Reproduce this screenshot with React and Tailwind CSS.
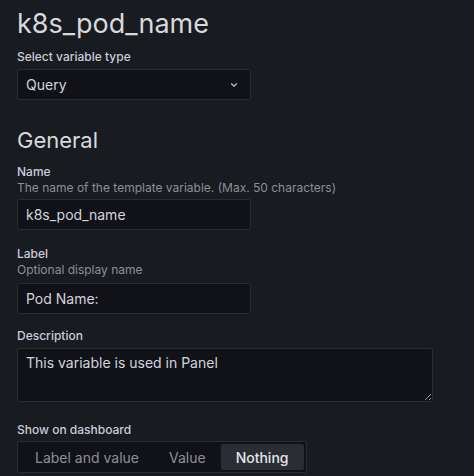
import React from "react";

function Label({ children, className = "" }) {
  return (
    <div className={`text-[12px] leading-[16px] font-medium text-[#ccccdc] ${className}`}>
      {children}
    </div>
  );
}

function Desc({ children }) {
  return <div className="text-[12px] leading-[16px] text-[#8e8f97]">{children}</div>;
}

function Input({ value, className = "" }) {
  return (
    <div
      className={`w-[234px] h-[31px] flex items-center px-[8px] bg-[#111217] border border-[#2a2c32] rounded-[2px] text-[14px] text-[#d4d4de] ${className}`}
    >
      {value}
    </div>
  );
}

export default function App() {
  return (
    <div
      className="w-[474px] h-[476px] bg-[#181b1f] px-[17px] overflow-hidden"
      style={{ fontFamily: "Inter, 'Noto Sans', sans-serif" }}
    >
      <div className="pt-[5px] text-[27px] leading-[37px] text-[#d8d9de]">k8s_pod_name</div>

      <Label className="mt-[7px]">Select variable type</Label>
      <div className="mt-[4px] w-[234px] h-[31px] flex items-center justify-between px-[8px] bg-[#111217] border border-[#2a2c32] rounded-[2px] text-[14px] text-[#d4d4de]">
        <span>Query</span>
        <svg width="10" height="10" viewBox="0 0 10 10" className="mr-[3px]">
          <path d="M2.5 3.8 L5 6.2 L7.5 3.8" fill="none" stroke="#b5b6be" strokeWidth="1.3" strokeLinecap="round" strokeLinejoin="round" />
        </svg>
      </div>

      <div className="mt-[26px] text-[22px] leading-[28px] text-[#d8d9de]">General</div>

      <Label className="mt-[10px]">Name</Label>
      <Desc>The name of the template variable. (Max. 50 characters)</Desc>
      <Input className="mt-[3px]" value="k8s_pod_name" />

      <Label className="mt-[16px]">Label</Label>
      <Desc>Optional display name</Desc>
      <Input className="mt-[5px]" value="Pod Name:" />

      <Label className="mt-[14px]">Description</Label>
      <textarea
        readOnly
        defaultValue="This variable is used in Panel"
        className="block mt-[4px] w-[416px] h-[54px] px-[8px] py-[4px] bg-[#111217] border border-[#2a2c32] rounded-[2px] text-[14px] leading-[20px] text-[#d4d4de] outline-none"
        style={{ fontFamily: "Inter, 'Noto Sans', sans-serif" }}
      />

      <Label className="mt-[20px]">Show on dashboard</Label>
      <div className="mt-[3px] inline-flex p-[2px] border border-[#2a2c32] rounded-[2px] bg-[#111217]">
        <div className="h-[26px] px-[15px] flex items-center text-[14px] text-[#8e8f97]">Label and value</div>
        <div className="h-[26px] px-[15px] flex items-center text-[14px] text-[#8e8f97]">Value</div>
        <div className="h-[26px] px-[15px] flex items-center text-[14px] font-medium text-[#e4e5ea] bg-[#2a2d33] rounded-[2px]">Nothing</div>
      </div>
    </div>
  );
}
